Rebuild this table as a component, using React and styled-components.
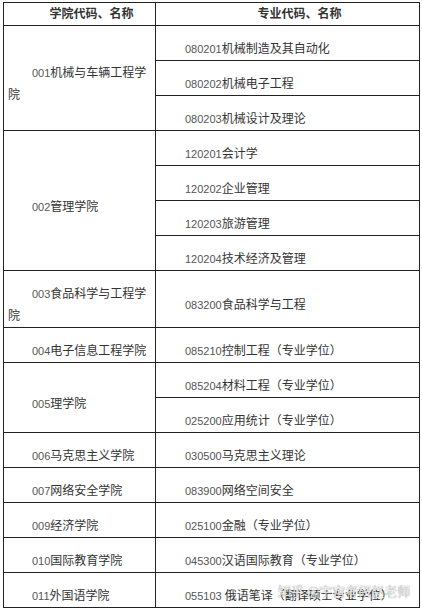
// Admissions table: school codes and programme codes
import React from 'react'
import styled, { createGlobalStyle } from 'styled-components'

const GlobalStyle = createGlobalStyle`
  html, body {
    margin: 0;
    padding: 0;
    background: #fff;
  }
`

const Page = styled.div`
  position: relative;
  padding: 2px 3px 0 3px;
  font-family: "Liberation Sans", "Noto Sans CJK SC", sans-serif;
  font-size: 12px;
  color: #333;
`

const Table = styled.table`
  width: 416px;
  border-collapse: collapse;
  table-layout: fixed;
`

const HeadCell = styled.th`
  height: 22px;
  padding: 0 4px;
  border: 1px solid #222;
  line-height: 22px;
  text-align: center;
  text-indent: 2em;
  font-weight: bold;
  color: #333;
`

const Cell = styled.td`
  padding: 12px 5px 0 ${p => (p.$left ? '4px' : '5px')};
  border: 1px solid #222;
  line-height: 22px;
  text-indent: 2em;
  vertical-align: middle;
  word-break: break-all;
`

const Code = styled.span`
  font-size: 11px;
  color: #555;
`

const Watermark = styled.div`
  position: absolute;
  left: 278px;
  top: 581px;
  font-family: "Noto Sans CJK SC", sans-serif;
  font-size: 13px;
  line-height: 20px;
  color: rgba(255, 255, 255, 0.85);
  text-shadow: 0 0 1px rgba(0, 0, 0, 0.6);
  pointer-events: none;
  white-space: nowrap;
`

const groups = [
  { code: '001', name: '机械与车辆工程学院', majors: [
    ['080201', '机械制造及其自动化'],
    ['080202', '机械电子工程'],
    ['080203', '机械设计及理论'],
  ] },
  { code: '002', name: '管理学院', majors: [
    ['120201', '会计学'],
    ['120202', '企业管理'],
    ['120203', '旅游管理'],
    ['120204', '技术经济及管理'],
  ] },
  { code: '003', name: '食品科学与工程学院', majors: [['083200', '食品科学与工程']] },
  { code: '004', name: '电子信息工程学院', majors: [['085210', '控制工程（专业学位）']] },
  { code: '005', name: '理学院', majors: [
    ['085204', '材料工程（专业学位）'],
    ['025200', '应用统计（专业学位）'],
  ] },
  { code: '006', name: '马克思主义学院', majors: [['030500', '马克思主义理论']] },
  { code: '007', name: '网络安全学院', majors: [['083900', '网络空间安全']] },
  { code: '009', name: '经济学院', majors: [['025100', '金融（专业学位）']] },
  { code: '010', name: '国际教育学院', majors: [['045300', '汉语国际教育（专业学位）']] },
  { code: '011', name: '外国语学院', majors: [['055103 ', '俄语笔译（翻译硕士专业学位）']] },
]

const App = () => {
  return (
    <Page>
      <GlobalStyle />
      <Table>
        <colgroup>
          <col style={{ width: 152 }} />
          <col style={{ width: 264 }} />
        </colgroup>
        <thead>
          <tr>
            <HeadCell>学院代码、名称</HeadCell>
            <HeadCell>专业代码、名称</HeadCell>
          </tr>
        </thead>
        <tbody>
          {groups.map(g =>
            g.majors.map((m, i) => (
              <tr key={g.code + m[0]}>
                {i === 0 && (
                  <Cell $left rowSpan={g.majors.length}>
                    <Code>{g.code}</Code>{g.name}
                  </Cell>
                )}
                <Cell>
                  <Code>{m[0]}</Code>{m[1]}
                </Cell>
              </tr>
            ))
          )}
        </tbody>
      </Table>
      <Watermark>知乎 @宇宙考研赵老师</Watermark>
    </Page>
  )
}

export default App
